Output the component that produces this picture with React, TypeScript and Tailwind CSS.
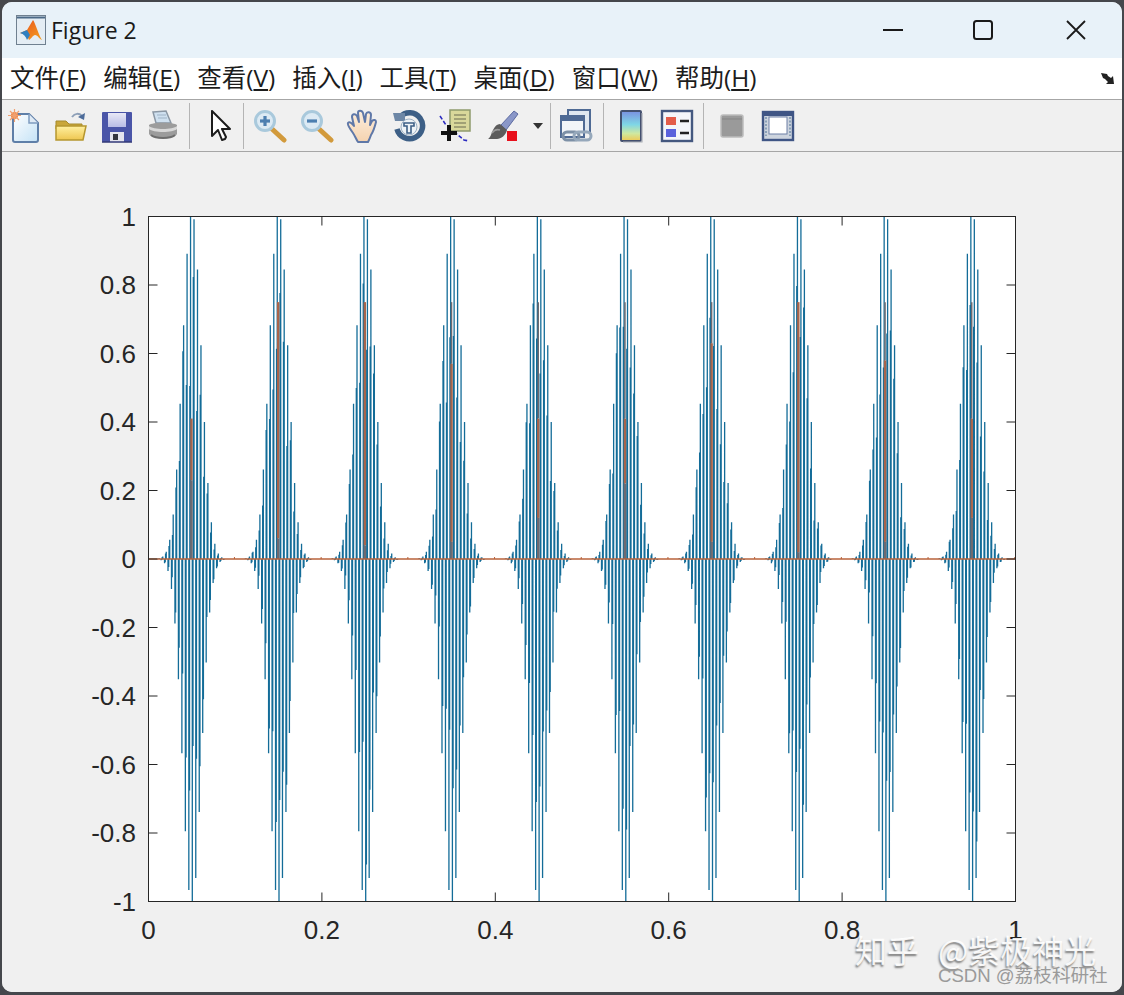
import React from 'react';

const menus = [
  { label: '文件', key: 'F' },
  { label: '编辑', key: 'E' },
  { label: '查看', key: 'V' },
  { label: '插入', key: 'I' },
  { label: '工具', key: 'T' },
  { label: '桌面', key: 'D' },
  { label: '窗口', key: 'W' },
  { label: '帮助', key: 'H' },
];

const Ico: React.FC<{ children: React.ReactNode; className?: string }> = ({ children, className = '' }) => (
  <button className={`w-[46px] h-[50px] flex items-center justify-center shrink-0 ${className}`}>
    <svg width="34" height="34" viewBox="0 0 34 34" className="blur-[0.4px]">
      {children}
    </svg>
  </button>
);

const Sep: React.FC<{ className?: string }> = ({ className = '' }) => (
  <div className={`w-px h-[46px] bg-[#b4b4b4] shrink-0 ${className}`} />
);

const NewIcon = () => (
  <>
    <path d="M5 5h16l9 9v17a2 2 0 0 1-2 2H7a2 2 0 0 1-2-2z" fill="url(#page)" stroke="#5f7fa8" strokeWidth="2" />
    <path d="M21 5v9h9" fill="#dfeaf5" stroke="#7f9cc0" strokeWidth="1.5" />
    <circle cx="6.5" cy="6.5" r="3.6" fill="#f08a4a" />
    <path d="M6.5 0v13M0 6.5h13M2 2l9 9M11 2l-9 9" stroke="#f0a070" strokeWidth="1.2" />
  </>
);

const OpenIcon = () => (
  <>
    <path d="M18 8c3-4 7-4 10-1" fill="none" stroke="#8ea0b8" strokeWidth="2" />
    <path d="M31 4l-1 7-6-3z" fill="#4d6c9a" />
    <path d="M2 12h10l3 3h13v5H2z" fill="#c9a63a" stroke="#a58a2c" />
    <path d="M2 31V17h30l-3 14z" fill="url(#folder)" stroke="#b5962f" strokeWidth="1.5" />
  </>
);

const SaveIcon = () => (
  <>
    <rect x="2" y="3" width="30" height="30" rx="1" fill="#4a55a8" />
    <rect x="8" y="4" width="18" height="14" fill="url(#label)" />
    <rect x="10" y="23" width="14" height="10" fill="#e4e4ee" />
    <rect x="13" y="25" width="5" height="6" fill="#33353f" />
    <path d="M2 33h30" stroke="#333a78" strokeWidth="1.5" />
  </>
);

const PrintIcon = () => (
  <>
    <path d="M7 3l13-1 5 12H10z" fill="#cfe0ef" stroke="#8b97a4" strokeWidth="1.5" />
    <path d="M11 6h9M12 9h9" stroke="#9fb3c6" />
    <path d="M3 16c3-3 25-3 28 0v9c-3 6-25 6-28 0z" fill="#9c9c9c" />
    <path d="M3 17c4 4 24 4 28 0v3c-4 4-24 4-28 0z" fill="#d8d8d8" />
    <path d="M5 26c5 4 19 4 24 0" stroke="#6e6e6e" strokeWidth="2" fill="none" />
  </>
);

const PointerIcon = () => (
  <path
    d="M9 2v25l6-6 4 10 3-1 1-2-4-8h8z"
    fill="#fff"
    stroke="#1c1c1c"
    strokeWidth="2"
    strokeLinejoin="round"
  />
);

const Lens: React.FC<{ plus?: boolean }> = ({ plus }) => (
  <>
    <path d="M18 19l13 12" stroke="#d29a3c" strokeWidth="5" strokeLinecap="round" />
    <circle cx="12" cy="12" r="9.5" fill="#dceaf4" stroke="#a9c9dc" strokeWidth="3" />
    <rect x="7" y="10.4" width="10" height="3.2" fill="#4c7fb0" />
    {plus && <rect x="10.4" y="7" width="3.2" height="10" fill="#4c7fb0" />}
  </>
);

const HandIcon = () => (
  <path
    d="M7 24C4 20 1 16 2 14c1-2 4 0 6 3L6 8c0-3 3-4 5-1l2 6-1-9c0-3 4-3 5 0l2 9 1-8c1-3 5-2 5 1l-1 10 2-4c2-2 4-1 4 1-1 4-3 10-5 13-1 3-2 5-3 7H12c-2-3-3-6-5-9z"
    fill="url(#skin)"
    stroke="#5f78a8"
    strokeWidth="2"
    strokeLinejoin="round"
  />
);

const RotateIcon = () => (
  <>
    <path d="M8 8A13 13 0 1 1 5 20" fill="none" stroke="#3d5f86" strokeWidth="5.5" />
    <path d="M1 4h12v8H3z" fill="#6d87a6" />
    <circle cx="17" cy="18" r="8" fill="#eef3f7" stroke="#9db0c3" />
    <path d="M12 14h10v3h-3v7h-4v-7h-3z" fill="none" stroke="#3d5f86" strokeWidth="1.6" />
  </>
);

const TipIcon = () => (
  <>
    <path d="M2 7l6 9M16 23l10 8 5 1" fill="none" stroke="#2a2ac0" strokeWidth="1.6" strokeDasharray="4 2" />
    <rect x="12" y="1" width="20" height="21" fill="#d9d89a" stroke="#8e9a6c" strokeWidth="1.5" />
    <path d="M16 6h12M16 10h12M16 14h12M16 18h12" stroke="#8e8e6a" strokeWidth="1.4" />
    <path d="M11 16v16M3 24h16" stroke="#111" strokeWidth="4" />
  </>
);

const BrushIcon = () => (
  <>
    <path d="M15 16L28 2l4 3-12 16z" fill="#8a97c8" stroke="#5c6aa0" />
    <path d="M14 15l7 6c-1 5-6 9-10 9H2c3-2 3-5 5-9s4-6 7-6z" fill="#5c5c5c" />
    <path d="M6 24c2-3 5-4 8-3" stroke="#9a9a9a" strokeWidth="1.6" fill="none" />
    <rect x="21" y="22" width="10" height="10" fill="#e8101c" />
  </>
);

const LinkIcon = () => (
  <>
    <rect x="9" y="1" width="22" height="22" fill="#dfe7f0" stroke="#4f6a94" strokeWidth="2" />
    <rect x="2" y="7" width="23" height="21" fill="#f2f5f8" stroke="#4f6a94" strokeWidth="2" />
    <path d="M2 8h23v4H2z" fill="#4f6a94" />
    <rect x="4" y="23" width="16" height="8" rx="4" fill="none" stroke="#7d90a6" strokeWidth="3" />
    <rect x="15" y="23" width="17" height="8" rx="4" fill="none" stroke="#96a8bb" strokeWidth="3" />
  </>
);

const ColorbarIcon = () => (
  <>
    <rect x="7" y="2" width="20" height="30" rx="1" fill="url(#bar)" stroke="#44506f" strokeWidth="2" />
    <path d="M28 4v29H9" fill="none" stroke="#a9adb6" strokeWidth="1.2" />
  </>
);

const LegendIcon = () => (
  <>
    <rect x="2" y="2" width="30" height="30" fill="#f4f6f9" stroke="#44587f" strokeWidth="2.4" />
    <rect x="6" y="8" width="10" height="8" fill="#e35d4a" />
    <rect x="6" y="20" width="10" height="8" fill="#5a62dc" />
    <path d="M20 12h9M20 24h9" stroke="#222" strokeWidth="2.4" />
  </>
);

const GrayIcon = () => (
  <>
    <rect x="6" y="6" width="22" height="22" rx="2" fill="#9a9a9a" stroke="#bcbcbc" strokeWidth="1.5" />
    <path d="M7 10h20" stroke="#858585" strokeWidth="1" />
  </>
);

const FrameIcon = () => (
  <>
    <rect x="2" y="3" width="30" height="28" fill="#cdd4de" stroke="#3f5585" strokeWidth="2.4" />
    <rect x="8" y="8" width="18" height="17" fill="#fff" stroke="#6d7fa5" />
    <path d="M2 5.5h30" stroke="#3f5585" strokeWidth="3" />
    <path d="M5 8v19M29 8v19" stroke="#8aa0b8" strokeWidth="2" strokeDasharray="2 1.5" />
  </>
);

const SPACING = 3.47;
const ZERO_Y = 559;
const UNIT_Y = 342.5;

const wobble = (k: number, m: number) => {
  const v = Math.sin(k * 12.9 + m * 78.2) * 437.5;
  return v - Math.floor(v);
};

// stems of one burst train; every burst sits on a tenth of the x range
function buildStems() {
  let d = '';
  for (let k = 0; k < 10; k++) {
    const tc = 148.5 + (0.05 + k * 0.1) * 867;
    for (let m = -9; m <= 9; m++) {
      const upX = tc - 1.3 + SPACING * m;
      const downX = tc + 0.45 + SPACING * m;
      const up = Math.exp(-Math.pow((upX - tc) / 13, 2)) * UNIT_Y * 1.02;
      const down = Math.exp(-Math.pow((downX - tc) / 13, 2)) * UNIT_Y * 1.02;
      d += `M${upX.toFixed(2)} ${ZERO_Y}v${(-Math.min(up, UNIT_Y)).toFixed(1)}`;
      d += `M${downX.toFixed(2)} ${ZERO_Y}v${Math.min(down, UNIT_Y).toFixed(1)}`;
      const w = wobble(k, m);
      d += `M${(upX - 0.7).toFixed(2)} ${ZERO_Y}v${(-up * (0.5 + w * 0.4)).toFixed(1)}`;
      const w2 = wobble(k + 20, m);
      d += `M${(downX + 0.7).toFixed(2)} ${ZERO_Y}v${(down * (0.5 + w2 * 0.4)).toFixed(1)}`;
    }
  }
  return d;
}

// second series: narrow spike in the middle of each burst
const spikes = [
  { top: 0.41, thin: 0.41, gray: 0.23 },
  { top: 0.75, thin: 0.75, gray: 0.06 },
  { top: 0.75, thin: 0.75, gray: 0.04 },
  { top: 0.57, thin: 0.75, gray: 0.05 },
  { top: 0.41, thin: 0.75, gray: 0.12 },
  { top: 0.41, thin: 0.75, gray: 0.22 },
  { top: 0.63, thin: 0.75, gray: 0.05 },
  { top: 0.75, thin: 0.75, gray: 0.02 },
  { top: 0.58, thin: 0.75, gray: 0.05 },
  { top: 0.41, thin: 0.75, gray: 0.12 },
];

const yLabels = ['1', '0.8', '0.6', '0.4', '0.2', '0', '-0.2', '-0.4', '-0.6', '-0.8', '-1'];
const xLabels = ['0', '0.2', '0.4', '0.6', '0.8', '1'];

const Plot = () => {
  const stems = buildStems();
  return (
    <svg width="980" height="770" viewBox="60 196 980 770" className="block">
      <rect x="148.5" y="216.5" width="867" height="685" fill="#fff" />
      <path d={stems} fill="none" stroke="#136c98" strokeWidth="1.3" />
      {spikes.map((s, k) => {
        const x = 148.5 + (0.05 + k * 0.1) * 867 - 0.4;
        return (
          <g key={k}>
            {s.thin > s.top && (
              <path d={`M${x} ${ZERO_Y - s.thin * UNIT_Y}V${ZERO_Y - s.top * UNIT_Y}`} stroke="#6c6a70" strokeWidth="1.5" />
            )}
            <path d={`M${x} ${ZERO_Y - s.top * UNIT_Y}V${ZERO_Y - s.gray * UNIT_Y}`} stroke="#a8644a" strokeWidth="2.4" />
            <path d={`M${x} ${ZERO_Y - s.gray * UNIT_Y}V${ZERO_Y}`} stroke="#6f6a70" strokeWidth="2.6" />
            <path d={`M${x + 43} ${ZERO_Y - 2}v2`} stroke="#b8623a" strokeWidth="1" />
          </g>
        );
      })}
      <path d={`M148.5 ${ZERO_Y}H1015`} stroke="#b8623a" strokeWidth="1.3" />
      <rect x="148.5" y="216.5" width="867" height="685" fill="none" stroke="#262626" strokeWidth="1" />
      {yLabels.map((l, i) => {
        const y = 216.5 + i * 68.5;
        return (
          <g key={l}>
            <path d={`M148.5 ${y}h9M1015.5 ${y}h-9`} stroke="#262626" strokeWidth="1" />
            <text x="136" y={y + 9} textAnchor="end" fontSize="26" fill="#262626" fontFamily='"Liberation Sans", sans-serif'>
              {l}
            </text>
          </g>
        );
      })}
      {xLabels.map((l, i) => {
        const x = 148.5 + i * 173.4;
        return (
          <g key={l}>
            <path d={`M${x} 901.5v-9M${x} 216.5v9`} stroke="#262626" strokeWidth="1" />
            <text x={x} y="939" textAnchor="middle" fontSize="26" fill="#262626" fontFamily='"Liberation Sans", sans-serif'>
              {l}
            </text>
          </g>
        );
      })}
    </svg>
  );
};

export default function App() {
  return (
    <div className="relative w-[1124px] h-[995px] bg-[#45474c] pt-[2px] px-[2px] pb-[3px] overflow-hidden">
      <svg width="0" height="0" className="absolute">
        <defs>
          <linearGradient id="page" x1="0" y1="0" x2="1" y2="1">
            <stop offset="0" stopColor="#ffffff" />
            <stop offset="1" stopColor="#c4e2f6" />
          </linearGradient>
          <linearGradient id="folder" x1="0" y1="0" x2="0" y2="1">
            <stop offset="0" stopColor="#fff0a0" />
            <stop offset="1" stopColor="#eec650" />
          </linearGradient>
          <linearGradient id="label" x1="0" y1="0" x2="0" y2="1">
            <stop offset="0" stopColor="#e8e8f6" />
            <stop offset="1" stopColor="#b9bde6" />
          </linearGradient>
          <linearGradient id="skin" x1="0" y1="0" x2="0" y2="1">
            <stop offset="0" stopColor="#fdeedd" />
            <stop offset="1" stopColor="#f5d3b0" />
          </linearGradient>
          <linearGradient id="bar" x1="0" y1="0" x2="0" y2="1">
            <stop offset="0" stopColor="#7a8fe0" />
            <stop offset="0.45" stopColor="#7fd6e6" />
            <stop offset="0.75" stopColor="#cfe8a0" />
            <stop offset="1" stopColor="#f0c850" />
          </linearGradient>
          <linearGradient id="mlab" x1="0" y1="0" x2="1" y2="1">
            <stop offset="0" stopColor="#e8501c" />
            <stop offset="1" stopColor="#f4a020" />
          </linearGradient>
        </defs>
      </svg>
      <div className="w-full h-full flex flex-col bg-[#f0f0f0] rounded-[10px] overflow-hidden">
        {/* title bar */}
        <div className="h-[56px] shrink-0 bg-[#e8f2f9] flex items-center">
          <svg width="30" height="30" viewBox="0 0 30 30" className="ml-[14px] mt-[-1px] blur-[0.3px]">
            <rect x="0.5" y="0.5" width="29" height="29" fill="#e4edf4" stroke="#6f8090" />
            <path d="M1 2.5h28" stroke="#4c6a88" strokeWidth="2" />
            <path d="M4 18l7-3 6-10c2 2 6 16 9 20-3-1-4-5-7-5-2 0-4 4-6 5-1-3-4-6-9-7z" fill="url(#mlab)" />
            <path d="M4 18l7-3 3 5-3 5c-1-3-3-6-7-7z" fill="#2f7fc0" />
          </svg>
          <span className='ml-[5px] text-[23px] text-[#1a1a1a] font-["Open_Sans",sans-serif]'>Figure 2</span>
          <div className="ml-auto flex items-center h-full">
            <button className="w-[87px] h-full flex items-center justify-center">
              <svg width="20" height="20" viewBox="0 0 20 20"><path d="M0 10h20" stroke="#1a1a1a" strokeWidth="2" /></svg>
            </button>
            <button className="w-[93px] h-full flex items-center justify-center">
              <svg width="20" height="20" viewBox="0 0 20 20"><rect x="1" y="1" width="18" height="18" rx="2.5" fill="none" stroke="#1a1a1a" strokeWidth="2" /></svg>
            </button>
            <button className="w-[93px] h-full flex items-center justify-center">
              <svg width="20" height="20" viewBox="0 0 20 20"><path d="M1 1l18 18M19 1L1 19" stroke="#1a1a1a" strokeWidth="1.8" /></svg>
            </button>
          </div>
        </div>
        {/* menu bar */}
        <div className='h-[42px] shrink-0 bg-white border-b border-[#a6a6a6] flex items-center pl-[8px] gap-[17px] text-[24.5px] text-[#1c1c1c] font-["Open_Sans","Noto_Sans_CJK_SC",sans-serif]'>
          {menus.map((m) => (
            <span key={m.key} className="whitespace-nowrap">
              {m.label}(<span className="underline underline-offset-2">{m.key}</span>)
            </span>
          ))}
          <svg width="16" height="14" viewBox="0 0 16 14" className="ml-auto mr-[6px]">
            <path d="M1 1l6 1 1 2 3 2 2-2 1 8-8 0 2-2-3-3-2-1z" fill="#222" />
          </svg>
        </div>
        {/* toolbar */}
        <div className="h-[52px] shrink-0 border-b border-[#a6a6a6] flex items-center bg-[#f0f0f0]">
          <Ico><NewIcon /></Ico>
          <Ico><OpenIcon /></Ico>
          <Ico><SaveIcon /></Ico>
          <Ico><PrintIcon /></Ico>
          <Sep className="ml-[3px]" />
          <Ico className="ml-[7px]"><PointerIcon /></Ico>
          <Sep />
          <Ico className="ml-[3px]"><Lens plus /></Ico>
          <Ico className="ml-px"><Lens /></Ico>
          <Ico><HandIcon /></Ico>
          <Ico><RotateIcon /></Ico>
          <Ico><TipIcon /></Ico>
          <Ico className="ml-[2px]"><BrushIcon /></Ico>
          <button className="w-[24px] h-[50px] flex items-center justify-center shrink-0">
            <svg width="10" height="6" viewBox="0 0 10 6"><path d="M0 0h10L5 6z" fill="#333" /></svg>
          </button>
          <Sep />
          <Ico className="ml-[2px]"><LinkIcon /></Ico>
          <Sep className="ml-[4px]" />
          <Ico className="ml-[4px]"><ColorbarIcon /></Ico>
          <Ico><LegendIcon /></Ico>
          <Sep className="ml-[3px]" />
          <Ico className="ml-[5px]"><GrayIcon /></Ico>
          <Ico><FrameIcon /></Ico>
        </div>
        {/* figure area */}
        <div className="flex-1 pl-[58px] pt-[44px] bg-[#f0f0f0]">
          <Plot />
        </div>
      </div>
      {/* watermarks */}
      <div className='absolute left-[855px] top-[926px] flex gap-[19px] text-[32px] leading-[46px] text-white/90 whitespace-nowrap font-["Noto_Sans_CJK_SC",sans-serif] [text-shadow:-1px_2px_2px_rgba(0,0,0,0.5)]'>
        <span>知乎</span>
        <span>@紫极神光</span>
      </div>
      <div className='absolute left-[938px] top-[963px] text-[18.6px] leading-[26px] text-[#9a9a9a] whitespace-nowrap font-["Liberation_Sans","Noto_Sans_CJK_SC",sans-serif]'>
        CSDN @荔枝科研社
      </div>
    </div>
  );
}
